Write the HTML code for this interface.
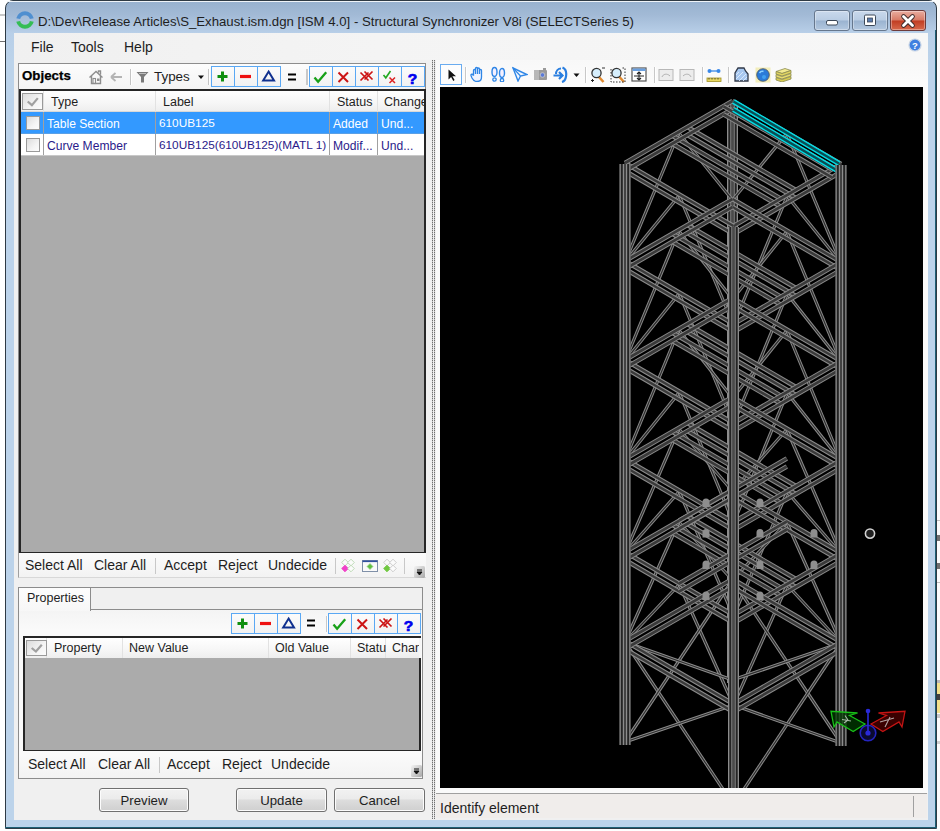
<!DOCTYPE html>
<html><head><meta charset="utf-8"><style>
*{margin:0;padding:0;box-sizing:border-box}
html,body{width:940px;height:831px;overflow:hidden;background:#fff;font-family:"Liberation Sans", sans-serif;}
.a{position:absolute}
.t{position:absolute;white-space:nowrap;line-height:1}
</style></head><body>
<div class="a" style="left:0px;top:0px;width:940px;height:831px;background:#fff"></div>
<div class="a" style="left:0px;top:14px;width:6px;height:2px;background:#c8c8c8"></div>
<div class="a" style="left:0px;top:41px;width:6px;height:1px;background:#707070"></div>
<div class="a" style="left:936px;top:41px;width:4px;height:1px;background:#707070"></div>
<div class="a" style="left:936px;top:0px;width:4px;height:831px;background:#fbfbfb"></div>
<div class="a" style="left:936px;top:520px;width:4px;height:1px;background:#c0c0c0"></div>
<div class="a" style="left:937px;top:535px;width:3px;height:6px;background:#707070"></div>
<div class="a" style="left:937px;top:563px;width:3px;height:6px;background:#707070"></div>
<div class="a" style="left:936px;top:582px;width:4px;height:1px;background:#c0c0c0"></div>
<div class="a" style="left:936px;top:680px;width:4px;height:3px;background:#b8b8b8"></div>
<div class="a" style="left:936px;top:683px;width:4px;height:30px;background:#f2e08a"></div>
<div class="a" style="left:937px;top:694px;width:3px;height:6px;background:#404040"></div>
<div class="a" style="left:936px;top:714px;width:4px;height:4px;background:#c8c8c8"></div>
<div class="a" style="left:936px;top:741px;width:4px;height:3px;background:#d0d0d0"></div>
<div class="a" style="left:5px;top:0px;width:932px;height:829px;border:1px solid #2e3a44;border-radius:8px 8px 0 0;background:linear-gradient(#97b1cf 0px,#a2bad6 14px,#b8cfe8 32px,#bcd3ea 60px,#bcd3ea 100%)"></div>
<div class="a" style="left:7px;top:1px;width:928px;height:1px;background:#eef3f8;border-radius:6px 6px 0 0"></div>
<div class="a" style="left:935px;top:30px;width:1px;height:798px;background:#1e5f74"></div>
<div class="a" style="left:5px;top:827px;width:932px;height:1px;background:#1e5f74"></div>
<div class="a" style="left:14px;top:33px;width:914px;height:787px;background:#f0f0f0"></div>
<div class="a" style="left:14px;top:33px;width:914px;height:27px;background:linear-gradient(90deg,#f0f0f0,#f4f4f4 40%,#f7f7f7)"></div>
<svg class="a" style="left:15px;top:10px;" width="20" height="20" viewBox="0 0 20 20"><path d="M3.2 8.6A7 7 0 0 1 16.8 8.6" fill="none" stroke="#4f8fd0" stroke-width="4"/><path d="M3.2 11.4A7 7 0 0 0 16.8 11.4" fill="none" stroke="#35bd55" stroke-width="4"/></svg>
<div class="t" style="left:38px;top:15px;font-size:13.2px;color:#1e1e1e;">D:\Dev\Release Articles\S_Exhaust.ism.dgn [ISM 4.0] - Structural Synchronizer V8i (SELECTSeries 5)</div>
<div class="a" style="left:814px;top:10px;width:36px;height:21px;border:1px solid #66778d;border-radius:3px;background:linear-gradient(#c9d9ec,#b9cce3 48%,#9ab3d0 52%,#b3c8e0);box-shadow:inset 0 0 0 1px rgba(255,255,255,0.35)"></div>
<svg class="a" style="left:814px;top:10px;" width="36" height="21" viewBox="0 0 36 21"><rect x="12.5" y="10.5" width="11" height="4.5" rx="1.5" fill="#fff" stroke="#3c4858" stroke-width="1"/></svg>
<div class="a" style="left:852px;top:10px;width:36px;height:21px;border:1px solid #66778d;border-radius:3px;background:linear-gradient(#c9d9ec,#b9cce3 48%,#9ab3d0 52%,#b3c8e0);box-shadow:inset 0 0 0 1px rgba(255,255,255,0.35)"></div>
<svg class="a" style="left:852px;top:10px;" width="36" height="21" viewBox="0 0 36 21"><rect x="12.5" y="5" width="11" height="10.5" rx="1.2" fill="#fff" stroke="#3c4858" stroke-width="1"/><rect x="15.5" y="8" width="5" height="4" fill="#5a7cae" stroke="#3c4858" stroke-width="0.8"/></svg>
<div class="a" style="left:890px;top:10px;width:36px;height:21px;border:1px solid #6d3b3b;border-radius:3px;background:linear-gradient(#e9ada0,#d77a66 48%,#c13d22 52%,#d7694c);box-shadow:inset 0 0 0 1px rgba(255,255,255,0.35)"></div>
<svg class="a" style="left:890px;top:10px;" width="36" height="21" viewBox="0 0 36 21"><path d="M13.5 6.5l9 9M22.5 6.5l-9 9" stroke="#3c2a2a" stroke-width="4.6" stroke-linecap="round"/><path d="M13.5 6.5l9 9M22.5 6.5l-9 9" stroke="#fff" stroke-width="2.8" stroke-linecap="round"/></svg>
<div class="t" style="left:31px;top:40px;font-size:14px;color:#1e1e1e;">File</div>
<div class="t" style="left:71px;top:40px;font-size:14px;color:#1e1e1e;">Tools</div>
<div class="t" style="left:124px;top:40px;font-size:14px;color:#1e1e1e;">Help</div>
<svg class="a" style="left:908px;top:38px;" width="14" height="14" viewBox="0 0 14 14"><circle cx="7" cy="7" r="6" fill="#3f7fe0" stroke="#c8d4e4" stroke-width="1.2"/><text x="7" y="11" text-anchor="middle" font-family="Liberation Sans" font-weight="bold" font-size="9.5" fill="#fff">?</text></svg>
<div class="a" style="left:436px;top:60px;width:492px;height:733px;background:#fafafa"></div>
<div class="a" style="left:440px;top:87px;width:483px;height:701px;background:#000;overflow:hidden"></div>
<svg class="a" style="left:440px;top:87px" width="483" height="701" viewBox="440 87 483 701"><rect x="727.0" y="102.0" width="11" height="581.0" fill="#242424"/>
<rect x="727.0" y="102.0" width="1.3" height="581.0" fill="#8c8c8c"/>
<rect x="730.3" y="102.0" width="1.2" height="581.0" fill="#8c8c8c"/>
<rect x="733.5" y="102.0" width="1.2" height="581.0" fill="#8c8c8c"/>
<rect x="736.7" y="102.0" width="1.3" height="581.0" fill="#8c8c8c"/>
<rect x="731.7" y="102.0" width="1.6" height="581.0" fill="#4a4a4a"/>
<line x1="732.5" y1="200.0" x2="786.8" y2="133.5" stroke="#8c8c8c" stroke-width="3.2"/>
<line x1="732.5" y1="200.0" x2="786.8" y2="133.5" stroke="#2c2c2c" stroke-width="1.2"/>
<line x1="841.0" y1="263.0" x2="786.8" y2="133.5" stroke="#8c8c8c" stroke-width="3.2"/>
<line x1="841.0" y1="263.0" x2="786.8" y2="133.5" stroke="#2c2c2c" stroke-width="1.2"/>
<line x1="841.0" y1="263.0" x2="787.2" y2="196.0" stroke="#8c8c8c" stroke-width="3.2"/>
<line x1="841.0" y1="263.0" x2="787.2" y2="196.0" stroke="#2c2c2c" stroke-width="1.2"/>
<line x1="733.5" y1="325.0" x2="787.2" y2="196.0" stroke="#8c8c8c" stroke-width="3.2"/>
<line x1="733.5" y1="325.0" x2="787.2" y2="196.0" stroke="#2c2c2c" stroke-width="1.2"/>
<line x1="625.0" y1="262.0" x2="679.2" y2="195.5" stroke="#8c8c8c" stroke-width="3.2"/>
<line x1="625.0" y1="262.0" x2="679.2" y2="195.5" stroke="#2c2c2c" stroke-width="1.2"/>
<line x1="733.5" y1="325.0" x2="679.2" y2="195.5" stroke="#8c8c8c" stroke-width="3.2"/>
<line x1="733.5" y1="325.0" x2="679.2" y2="195.5" stroke="#2c2c2c" stroke-width="1.2"/>
<line x1="732.5" y1="200.0" x2="678.8" y2="133.0" stroke="#8c8c8c" stroke-width="3.2"/>
<line x1="732.5" y1="200.0" x2="678.8" y2="133.0" stroke="#2c2c2c" stroke-width="1.2"/>
<line x1="625.0" y1="262.0" x2="678.8" y2="133.0" stroke="#8c8c8c" stroke-width="3.2"/>
<line x1="625.0" y1="262.0" x2="678.8" y2="133.0" stroke="#2c2c2c" stroke-width="1.2"/>
<line x1="732.5" y1="299.0" x2="786.8" y2="231.5" stroke="#8c8c8c" stroke-width="3.2"/>
<line x1="732.5" y1="299.0" x2="786.8" y2="231.5" stroke="#2c2c2c" stroke-width="1.2"/>
<line x1="841.0" y1="362.0" x2="786.8" y2="231.5" stroke="#8c8c8c" stroke-width="3.2"/>
<line x1="841.0" y1="362.0" x2="786.8" y2="231.5" stroke="#2c2c2c" stroke-width="1.2"/>
<line x1="841.0" y1="362.0" x2="787.2" y2="294.0" stroke="#8c8c8c" stroke-width="3.2"/>
<line x1="841.0" y1="362.0" x2="787.2" y2="294.0" stroke="#2c2c2c" stroke-width="1.2"/>
<line x1="733.5" y1="424.0" x2="787.2" y2="294.0" stroke="#8c8c8c" stroke-width="3.2"/>
<line x1="733.5" y1="424.0" x2="787.2" y2="294.0" stroke="#2c2c2c" stroke-width="1.2"/>
<line x1="625.0" y1="361.0" x2="679.2" y2="293.5" stroke="#8c8c8c" stroke-width="3.2"/>
<line x1="625.0" y1="361.0" x2="679.2" y2="293.5" stroke="#2c2c2c" stroke-width="1.2"/>
<line x1="733.5" y1="424.0" x2="679.2" y2="293.5" stroke="#8c8c8c" stroke-width="3.2"/>
<line x1="733.5" y1="424.0" x2="679.2" y2="293.5" stroke="#2c2c2c" stroke-width="1.2"/>
<line x1="732.5" y1="299.0" x2="678.8" y2="231.0" stroke="#8c8c8c" stroke-width="3.2"/>
<line x1="732.5" y1="299.0" x2="678.8" y2="231.0" stroke="#2c2c2c" stroke-width="1.2"/>
<line x1="625.0" y1="361.0" x2="678.8" y2="231.0" stroke="#8c8c8c" stroke-width="3.2"/>
<line x1="625.0" y1="361.0" x2="678.8" y2="231.0" stroke="#2c2c2c" stroke-width="1.2"/>
<line x1="732.5" y1="398.0" x2="786.8" y2="330.5" stroke="#8c8c8c" stroke-width="3.2"/>
<line x1="732.5" y1="398.0" x2="786.8" y2="330.5" stroke="#2c2c2c" stroke-width="1.2"/>
<line x1="841.0" y1="461.0" x2="786.8" y2="330.5" stroke="#8c8c8c" stroke-width="3.2"/>
<line x1="841.0" y1="461.0" x2="786.8" y2="330.5" stroke="#2c2c2c" stroke-width="1.2"/>
<line x1="841.0" y1="461.0" x2="787.2" y2="393.0" stroke="#8c8c8c" stroke-width="3.2"/>
<line x1="841.0" y1="461.0" x2="787.2" y2="393.0" stroke="#2c2c2c" stroke-width="1.2"/>
<line x1="733.5" y1="523.0" x2="787.2" y2="393.0" stroke="#8c8c8c" stroke-width="3.2"/>
<line x1="733.5" y1="523.0" x2="787.2" y2="393.0" stroke="#2c2c2c" stroke-width="1.2"/>
<line x1="625.0" y1="460.0" x2="679.2" y2="392.5" stroke="#8c8c8c" stroke-width="3.2"/>
<line x1="625.0" y1="460.0" x2="679.2" y2="392.5" stroke="#2c2c2c" stroke-width="1.2"/>
<line x1="733.5" y1="523.0" x2="679.2" y2="392.5" stroke="#8c8c8c" stroke-width="3.2"/>
<line x1="733.5" y1="523.0" x2="679.2" y2="392.5" stroke="#2c2c2c" stroke-width="1.2"/>
<line x1="732.5" y1="398.0" x2="678.8" y2="330.0" stroke="#8c8c8c" stroke-width="3.2"/>
<line x1="732.5" y1="398.0" x2="678.8" y2="330.0" stroke="#2c2c2c" stroke-width="1.2"/>
<line x1="625.0" y1="460.0" x2="678.8" y2="330.0" stroke="#8c8c8c" stroke-width="3.2"/>
<line x1="625.0" y1="460.0" x2="678.8" y2="330.0" stroke="#2c2c2c" stroke-width="1.2"/>
<line x1="732.5" y1="491.0" x2="786.8" y2="429.5" stroke="#8c8c8c" stroke-width="3.2"/>
<line x1="732.5" y1="491.0" x2="786.8" y2="429.5" stroke="#2c2c2c" stroke-width="1.2"/>
<line x1="841.0" y1="554.0" x2="786.8" y2="429.5" stroke="#8c8c8c" stroke-width="3.2"/>
<line x1="841.0" y1="554.0" x2="786.8" y2="429.5" stroke="#2c2c2c" stroke-width="1.2"/>
<line x1="841.0" y1="554.0" x2="787.2" y2="492.0" stroke="#8c8c8c" stroke-width="3.2"/>
<line x1="841.0" y1="554.0" x2="787.2" y2="492.0" stroke="#2c2c2c" stroke-width="1.2"/>
<line x1="733.5" y1="616.0" x2="787.2" y2="492.0" stroke="#8c8c8c" stroke-width="3.2"/>
<line x1="733.5" y1="616.0" x2="787.2" y2="492.0" stroke="#2c2c2c" stroke-width="1.2"/>
<line x1="625.0" y1="553.0" x2="679.2" y2="491.5" stroke="#8c8c8c" stroke-width="3.2"/>
<line x1="625.0" y1="553.0" x2="679.2" y2="491.5" stroke="#2c2c2c" stroke-width="1.2"/>
<line x1="733.5" y1="616.0" x2="679.2" y2="491.5" stroke="#8c8c8c" stroke-width="3.2"/>
<line x1="733.5" y1="616.0" x2="679.2" y2="491.5" stroke="#2c2c2c" stroke-width="1.2"/>
<line x1="732.5" y1="491.0" x2="678.8" y2="429.0" stroke="#8c8c8c" stroke-width="3.2"/>
<line x1="732.5" y1="491.0" x2="678.8" y2="429.0" stroke="#2c2c2c" stroke-width="1.2"/>
<line x1="625.0" y1="553.0" x2="678.8" y2="429.0" stroke="#8c8c8c" stroke-width="3.2"/>
<line x1="625.0" y1="553.0" x2="678.8" y2="429.0" stroke="#2c2c2c" stroke-width="1.2"/>
<line x1="732.5" y1="580.0" x2="786.8" y2="522.5" stroke="#8c8c8c" stroke-width="3.2"/>
<line x1="732.5" y1="580.0" x2="786.8" y2="522.5" stroke="#2c2c2c" stroke-width="1.2"/>
<line x1="841.0" y1="643.0" x2="786.8" y2="522.5" stroke="#8c8c8c" stroke-width="3.2"/>
<line x1="841.0" y1="643.0" x2="786.8" y2="522.5" stroke="#2c2c2c" stroke-width="1.2"/>
<line x1="841.0" y1="643.0" x2="787.2" y2="585.0" stroke="#8c8c8c" stroke-width="3.2"/>
<line x1="841.0" y1="643.0" x2="787.2" y2="585.0" stroke="#2c2c2c" stroke-width="1.2"/>
<line x1="733.5" y1="705.0" x2="787.2" y2="585.0" stroke="#8c8c8c" stroke-width="3.2"/>
<line x1="733.5" y1="705.0" x2="787.2" y2="585.0" stroke="#2c2c2c" stroke-width="1.2"/>
<line x1="625.0" y1="642.0" x2="679.2" y2="584.5" stroke="#8c8c8c" stroke-width="3.2"/>
<line x1="625.0" y1="642.0" x2="679.2" y2="584.5" stroke="#2c2c2c" stroke-width="1.2"/>
<line x1="733.5" y1="705.0" x2="679.2" y2="584.5" stroke="#8c8c8c" stroke-width="3.2"/>
<line x1="733.5" y1="705.0" x2="679.2" y2="584.5" stroke="#2c2c2c" stroke-width="1.2"/>
<line x1="732.5" y1="580.0" x2="678.8" y2="522.0" stroke="#8c8c8c" stroke-width="3.2"/>
<line x1="732.5" y1="580.0" x2="678.8" y2="522.0" stroke="#2c2c2c" stroke-width="1.2"/>
<line x1="625.0" y1="642.0" x2="678.8" y2="522.0" stroke="#8c8c8c" stroke-width="3.2"/>
<line x1="625.0" y1="642.0" x2="678.8" y2="522.0" stroke="#2c2c2c" stroke-width="1.2"/>
<line x1="732.5" y1="580.0" x2="841.0" y2="743.0" stroke="#8c8c8c" stroke-width="3.2"/>
<line x1="732.5" y1="580.0" x2="841.0" y2="743.0" stroke="#2c2c2c" stroke-width="1.2"/>
<line x1="841.0" y1="643.0" x2="732.5" y2="680.0" stroke="#8c8c8c" stroke-width="3.2"/>
<line x1="841.0" y1="643.0" x2="732.5" y2="680.0" stroke="#2c2c2c" stroke-width="1.2"/>
<line x1="841.0" y1="643.0" x2="733.5" y2="805.0" stroke="#8c8c8c" stroke-width="3.2"/>
<line x1="841.0" y1="643.0" x2="733.5" y2="805.0" stroke="#2c2c2c" stroke-width="1.2"/>
<line x1="733.5" y1="705.0" x2="841.0" y2="743.0" stroke="#8c8c8c" stroke-width="3.2"/>
<line x1="733.5" y1="705.0" x2="841.0" y2="743.0" stroke="#2c2c2c" stroke-width="1.2"/>
<line x1="625.0" y1="642.0" x2="733.5" y2="805.0" stroke="#8c8c8c" stroke-width="3.2"/>
<line x1="625.0" y1="642.0" x2="733.5" y2="805.0" stroke="#2c2c2c" stroke-width="1.2"/>
<line x1="733.5" y1="705.0" x2="625.0" y2="742.0" stroke="#8c8c8c" stroke-width="3.2"/>
<line x1="733.5" y1="705.0" x2="625.0" y2="742.0" stroke="#2c2c2c" stroke-width="1.2"/>
<line x1="732.5" y1="580.0" x2="625.0" y2="742.0" stroke="#8c8c8c" stroke-width="3.2"/>
<line x1="732.5" y1="580.0" x2="625.0" y2="742.0" stroke="#2c2c2c" stroke-width="1.2"/>
<line x1="625.0" y1="642.0" x2="732.5" y2="680.0" stroke="#8c8c8c" stroke-width="3.2"/>
<line x1="625.0" y1="642.0" x2="732.5" y2="680.0" stroke="#2c2c2c" stroke-width="1.2"/>
<line x1="687.4" y1="127.0" x2="795.9" y2="190.0" stroke="#8c8c8c" stroke-width="4.6"/>
<line x1="687.4" y1="127.0" x2="795.9" y2="190.0" stroke="#3a3a3a" stroke-width="2.6"/>
<line x1="687.4" y1="135.0" x2="795.9" y2="198.0" stroke="#8c8c8c" stroke-width="4.6"/>
<line x1="687.4" y1="135.0" x2="795.9" y2="198.0" stroke="#3a3a3a" stroke-width="2.6"/>
<line x1="672.3" y1="135.7" x2="780.8" y2="198.7" stroke="#8c8c8c" stroke-width="4.6"/>
<line x1="672.3" y1="135.7" x2="780.8" y2="198.7" stroke="#3a3a3a" stroke-width="2.6"/>
<line x1="672.3" y1="143.7" x2="780.8" y2="206.7" stroke="#8c8c8c" stroke-width="4.6"/>
<line x1="672.3" y1="143.7" x2="780.8" y2="206.7" stroke="#3a3a3a" stroke-width="2.6"/>
<line x1="732.5" y1="101.0" x2="841.0" y2="164.0" stroke="#8c8c8c" stroke-width="4.6"/>
<line x1="732.5" y1="101.0" x2="841.0" y2="164.0" stroke="#3a3a3a" stroke-width="2.6"/>
<line x1="732.5" y1="109.0" x2="841.0" y2="172.0" stroke="#8c8c8c" stroke-width="4.6"/>
<line x1="732.5" y1="109.0" x2="841.0" y2="172.0" stroke="#3a3a3a" stroke-width="2.6"/>
<line x1="841.0" y1="164.0" x2="733.5" y2="226.0" stroke="#8c8c8c" stroke-width="4.6"/>
<line x1="841.0" y1="164.0" x2="733.5" y2="226.0" stroke="#3a3a3a" stroke-width="2.6"/>
<line x1="841.0" y1="172.0" x2="733.5" y2="234.0" stroke="#8c8c8c" stroke-width="4.6"/>
<line x1="841.0" y1="172.0" x2="733.5" y2="234.0" stroke="#3a3a3a" stroke-width="2.6"/>
<line x1="733.5" y1="226.0" x2="625.0" y2="163.0" stroke="#8c8c8c" stroke-width="4.6"/>
<line x1="733.5" y1="226.0" x2="625.0" y2="163.0" stroke="#3a3a3a" stroke-width="2.6"/>
<line x1="733.5" y1="234.0" x2="625.0" y2="171.0" stroke="#8c8c8c" stroke-width="4.6"/>
<line x1="733.5" y1="234.0" x2="625.0" y2="171.0" stroke="#3a3a3a" stroke-width="2.6"/>
<line x1="625.0" y1="163.0" x2="732.5" y2="101.0" stroke="#8c8c8c" stroke-width="4.6"/>
<line x1="625.0" y1="163.0" x2="732.5" y2="101.0" stroke="#3a3a3a" stroke-width="2.6"/>
<line x1="625.0" y1="171.0" x2="732.5" y2="109.0" stroke="#8c8c8c" stroke-width="4.6"/>
<line x1="625.0" y1="171.0" x2="732.5" y2="109.0" stroke="#3a3a3a" stroke-width="2.6"/>
<line x1="687.4" y1="225.0" x2="795.9" y2="288.0" stroke="#8c8c8c" stroke-width="4.6"/>
<line x1="687.4" y1="225.0" x2="795.9" y2="288.0" stroke="#3a3a3a" stroke-width="2.6"/>
<line x1="687.4" y1="233.0" x2="795.9" y2="296.0" stroke="#8c8c8c" stroke-width="4.6"/>
<line x1="687.4" y1="233.0" x2="795.9" y2="296.0" stroke="#3a3a3a" stroke-width="2.6"/>
<line x1="672.3" y1="233.7" x2="780.8" y2="296.7" stroke="#8c8c8c" stroke-width="4.6"/>
<line x1="672.3" y1="233.7" x2="780.8" y2="296.7" stroke="#3a3a3a" stroke-width="2.6"/>
<line x1="672.3" y1="241.7" x2="780.8" y2="304.7" stroke="#8c8c8c" stroke-width="4.6"/>
<line x1="672.3" y1="241.7" x2="780.8" y2="304.7" stroke="#3a3a3a" stroke-width="2.6"/>
<line x1="732.5" y1="199.0" x2="841.0" y2="262.0" stroke="#8c8c8c" stroke-width="4.6"/>
<line x1="732.5" y1="199.0" x2="841.0" y2="262.0" stroke="#3a3a3a" stroke-width="2.6"/>
<line x1="732.5" y1="207.0" x2="841.0" y2="270.0" stroke="#8c8c8c" stroke-width="4.6"/>
<line x1="732.5" y1="207.0" x2="841.0" y2="270.0" stroke="#3a3a3a" stroke-width="2.6"/>
<line x1="841.0" y1="262.0" x2="733.5" y2="324.0" stroke="#8c8c8c" stroke-width="4.6"/>
<line x1="841.0" y1="262.0" x2="733.5" y2="324.0" stroke="#3a3a3a" stroke-width="2.6"/>
<line x1="841.0" y1="270.0" x2="733.5" y2="332.0" stroke="#8c8c8c" stroke-width="4.6"/>
<line x1="841.0" y1="270.0" x2="733.5" y2="332.0" stroke="#3a3a3a" stroke-width="2.6"/>
<line x1="733.5" y1="324.0" x2="625.0" y2="261.0" stroke="#8c8c8c" stroke-width="4.6"/>
<line x1="733.5" y1="324.0" x2="625.0" y2="261.0" stroke="#3a3a3a" stroke-width="2.6"/>
<line x1="733.5" y1="332.0" x2="625.0" y2="269.0" stroke="#8c8c8c" stroke-width="4.6"/>
<line x1="733.5" y1="332.0" x2="625.0" y2="269.0" stroke="#3a3a3a" stroke-width="2.6"/>
<line x1="625.0" y1="261.0" x2="732.5" y2="199.0" stroke="#8c8c8c" stroke-width="4.6"/>
<line x1="625.0" y1="261.0" x2="732.5" y2="199.0" stroke="#3a3a3a" stroke-width="2.6"/>
<line x1="625.0" y1="269.0" x2="732.5" y2="207.0" stroke="#8c8c8c" stroke-width="4.6"/>
<line x1="625.0" y1="269.0" x2="732.5" y2="207.0" stroke="#3a3a3a" stroke-width="2.6"/>
<line x1="687.4" y1="324.0" x2="795.9" y2="387.0" stroke="#8c8c8c" stroke-width="4.6"/>
<line x1="687.4" y1="324.0" x2="795.9" y2="387.0" stroke="#3a3a3a" stroke-width="2.6"/>
<line x1="687.4" y1="332.0" x2="795.9" y2="395.0" stroke="#8c8c8c" stroke-width="4.6"/>
<line x1="687.4" y1="332.0" x2="795.9" y2="395.0" stroke="#3a3a3a" stroke-width="2.6"/>
<line x1="672.3" y1="332.7" x2="780.8" y2="395.7" stroke="#8c8c8c" stroke-width="4.6"/>
<line x1="672.3" y1="332.7" x2="780.8" y2="395.7" stroke="#3a3a3a" stroke-width="2.6"/>
<line x1="672.3" y1="340.7" x2="780.8" y2="403.7" stroke="#8c8c8c" stroke-width="4.6"/>
<line x1="672.3" y1="340.7" x2="780.8" y2="403.7" stroke="#3a3a3a" stroke-width="2.6"/>
<line x1="732.5" y1="298.0" x2="841.0" y2="361.0" stroke="#8c8c8c" stroke-width="4.6"/>
<line x1="732.5" y1="298.0" x2="841.0" y2="361.0" stroke="#3a3a3a" stroke-width="2.6"/>
<line x1="732.5" y1="306.0" x2="841.0" y2="369.0" stroke="#8c8c8c" stroke-width="4.6"/>
<line x1="732.5" y1="306.0" x2="841.0" y2="369.0" stroke="#3a3a3a" stroke-width="2.6"/>
<line x1="841.0" y1="361.0" x2="733.5" y2="423.0" stroke="#8c8c8c" stroke-width="4.6"/>
<line x1="841.0" y1="361.0" x2="733.5" y2="423.0" stroke="#3a3a3a" stroke-width="2.6"/>
<line x1="841.0" y1="369.0" x2="733.5" y2="431.0" stroke="#8c8c8c" stroke-width="4.6"/>
<line x1="841.0" y1="369.0" x2="733.5" y2="431.0" stroke="#3a3a3a" stroke-width="2.6"/>
<line x1="733.5" y1="423.0" x2="625.0" y2="360.0" stroke="#8c8c8c" stroke-width="4.6"/>
<line x1="733.5" y1="423.0" x2="625.0" y2="360.0" stroke="#3a3a3a" stroke-width="2.6"/>
<line x1="733.5" y1="431.0" x2="625.0" y2="368.0" stroke="#8c8c8c" stroke-width="4.6"/>
<line x1="733.5" y1="431.0" x2="625.0" y2="368.0" stroke="#3a3a3a" stroke-width="2.6"/>
<line x1="625.0" y1="360.0" x2="732.5" y2="298.0" stroke="#8c8c8c" stroke-width="4.6"/>
<line x1="625.0" y1="360.0" x2="732.5" y2="298.0" stroke="#3a3a3a" stroke-width="2.6"/>
<line x1="625.0" y1="368.0" x2="732.5" y2="306.0" stroke="#8c8c8c" stroke-width="4.6"/>
<line x1="625.0" y1="368.0" x2="732.5" y2="306.0" stroke="#3a3a3a" stroke-width="2.6"/>
<line x1="687.4" y1="423.0" x2="795.9" y2="486.0" stroke="#8c8c8c" stroke-width="4.6"/>
<line x1="687.4" y1="423.0" x2="795.9" y2="486.0" stroke="#3a3a3a" stroke-width="2.6"/>
<line x1="687.4" y1="431.0" x2="795.9" y2="494.0" stroke="#8c8c8c" stroke-width="4.6"/>
<line x1="687.4" y1="431.0" x2="795.9" y2="494.0" stroke="#3a3a3a" stroke-width="2.6"/>
<line x1="672.3" y1="431.7" x2="780.8" y2="494.7" stroke="#8c8c8c" stroke-width="4.6"/>
<line x1="672.3" y1="431.7" x2="780.8" y2="494.7" stroke="#3a3a3a" stroke-width="2.6"/>
<line x1="672.3" y1="439.7" x2="780.8" y2="502.7" stroke="#8c8c8c" stroke-width="4.6"/>
<line x1="672.3" y1="439.7" x2="780.8" y2="502.7" stroke="#3a3a3a" stroke-width="2.6"/>
<line x1="732.5" y1="397.0" x2="841.0" y2="460.0" stroke="#8c8c8c" stroke-width="4.6"/>
<line x1="732.5" y1="397.0" x2="841.0" y2="460.0" stroke="#3a3a3a" stroke-width="2.6"/>
<line x1="732.5" y1="405.0" x2="841.0" y2="468.0" stroke="#8c8c8c" stroke-width="4.6"/>
<line x1="732.5" y1="405.0" x2="841.0" y2="468.0" stroke="#3a3a3a" stroke-width="2.6"/>
<line x1="841.0" y1="460.0" x2="733.5" y2="522.0" stroke="#8c8c8c" stroke-width="4.6"/>
<line x1="841.0" y1="460.0" x2="733.5" y2="522.0" stroke="#3a3a3a" stroke-width="2.6"/>
<line x1="841.0" y1="468.0" x2="733.5" y2="530.0" stroke="#8c8c8c" stroke-width="4.6"/>
<line x1="841.0" y1="468.0" x2="733.5" y2="530.0" stroke="#3a3a3a" stroke-width="2.6"/>
<line x1="733.5" y1="522.0" x2="625.0" y2="459.0" stroke="#8c8c8c" stroke-width="4.6"/>
<line x1="733.5" y1="522.0" x2="625.0" y2="459.0" stroke="#3a3a3a" stroke-width="2.6"/>
<line x1="733.5" y1="530.0" x2="625.0" y2="467.0" stroke="#8c8c8c" stroke-width="4.6"/>
<line x1="733.5" y1="530.0" x2="625.0" y2="467.0" stroke="#3a3a3a" stroke-width="2.6"/>
<line x1="625.0" y1="459.0" x2="732.5" y2="397.0" stroke="#8c8c8c" stroke-width="4.6"/>
<line x1="625.0" y1="459.0" x2="732.5" y2="397.0" stroke="#3a3a3a" stroke-width="2.6"/>
<line x1="625.0" y1="467.0" x2="732.5" y2="405.0" stroke="#8c8c8c" stroke-width="4.6"/>
<line x1="625.0" y1="467.0" x2="732.5" y2="405.0" stroke="#3a3a3a" stroke-width="2.6"/>
<line x1="687.4" y1="516.0" x2="795.9" y2="579.0" stroke="#8c8c8c" stroke-width="4.6"/>
<line x1="687.4" y1="516.0" x2="795.9" y2="579.0" stroke="#3a3a3a" stroke-width="2.6"/>
<line x1="687.4" y1="524.0" x2="795.9" y2="587.0" stroke="#8c8c8c" stroke-width="4.6"/>
<line x1="687.4" y1="524.0" x2="795.9" y2="587.0" stroke="#3a3a3a" stroke-width="2.6"/>
<line x1="672.3" y1="524.7" x2="780.8" y2="587.7" stroke="#8c8c8c" stroke-width="4.6"/>
<line x1="672.3" y1="524.7" x2="780.8" y2="587.7" stroke="#3a3a3a" stroke-width="2.6"/>
<line x1="672.3" y1="532.7" x2="780.8" y2="595.7" stroke="#8c8c8c" stroke-width="4.6"/>
<line x1="672.3" y1="532.7" x2="780.8" y2="595.7" stroke="#3a3a3a" stroke-width="2.6"/>
<line x1="732.5" y1="490.0" x2="841.0" y2="553.0" stroke="#8c8c8c" stroke-width="4.6"/>
<line x1="732.5" y1="490.0" x2="841.0" y2="553.0" stroke="#3a3a3a" stroke-width="2.6"/>
<line x1="732.5" y1="498.0" x2="841.0" y2="561.0" stroke="#8c8c8c" stroke-width="4.6"/>
<line x1="732.5" y1="498.0" x2="841.0" y2="561.0" stroke="#3a3a3a" stroke-width="2.6"/>
<line x1="841.0" y1="553.0" x2="733.5" y2="615.0" stroke="#8c8c8c" stroke-width="4.6"/>
<line x1="841.0" y1="553.0" x2="733.5" y2="615.0" stroke="#3a3a3a" stroke-width="2.6"/>
<line x1="841.0" y1="561.0" x2="733.5" y2="623.0" stroke="#8c8c8c" stroke-width="4.6"/>
<line x1="841.0" y1="561.0" x2="733.5" y2="623.0" stroke="#3a3a3a" stroke-width="2.6"/>
<line x1="733.5" y1="615.0" x2="625.0" y2="552.0" stroke="#8c8c8c" stroke-width="4.6"/>
<line x1="733.5" y1="615.0" x2="625.0" y2="552.0" stroke="#3a3a3a" stroke-width="2.6"/>
<line x1="733.5" y1="623.0" x2="625.0" y2="560.0" stroke="#8c8c8c" stroke-width="4.6"/>
<line x1="733.5" y1="623.0" x2="625.0" y2="560.0" stroke="#3a3a3a" stroke-width="2.6"/>
<line x1="625.0" y1="552.0" x2="732.5" y2="490.0" stroke="#8c8c8c" stroke-width="4.6"/>
<line x1="625.0" y1="552.0" x2="732.5" y2="490.0" stroke="#3a3a3a" stroke-width="2.6"/>
<line x1="625.0" y1="560.0" x2="732.5" y2="498.0" stroke="#8c8c8c" stroke-width="4.6"/>
<line x1="625.0" y1="560.0" x2="732.5" y2="498.0" stroke="#3a3a3a" stroke-width="2.6"/>
<line x1="732.5" y1="579.0" x2="841.0" y2="642.0" stroke="#8c8c8c" stroke-width="4.6"/>
<line x1="732.5" y1="579.0" x2="841.0" y2="642.0" stroke="#3a3a3a" stroke-width="2.6"/>
<line x1="732.5" y1="587.0" x2="841.0" y2="650.0" stroke="#8c8c8c" stroke-width="4.6"/>
<line x1="732.5" y1="587.0" x2="841.0" y2="650.0" stroke="#3a3a3a" stroke-width="2.6"/>
<line x1="841.0" y1="642.0" x2="733.5" y2="704.0" stroke="#8c8c8c" stroke-width="4.6"/>
<line x1="841.0" y1="642.0" x2="733.5" y2="704.0" stroke="#3a3a3a" stroke-width="2.6"/>
<line x1="841.0" y1="650.0" x2="733.5" y2="712.0" stroke="#8c8c8c" stroke-width="4.6"/>
<line x1="841.0" y1="650.0" x2="733.5" y2="712.0" stroke="#3a3a3a" stroke-width="2.6"/>
<line x1="733.5" y1="704.0" x2="625.0" y2="641.0" stroke="#8c8c8c" stroke-width="4.6"/>
<line x1="733.5" y1="704.0" x2="625.0" y2="641.0" stroke="#3a3a3a" stroke-width="2.6"/>
<line x1="733.5" y1="712.0" x2="625.0" y2="649.0" stroke="#8c8c8c" stroke-width="4.6"/>
<line x1="733.5" y1="712.0" x2="625.0" y2="649.0" stroke="#3a3a3a" stroke-width="2.6"/>
<line x1="625.0" y1="641.0" x2="732.5" y2="579.0" stroke="#8c8c8c" stroke-width="4.6"/>
<line x1="625.0" y1="641.0" x2="732.5" y2="579.0" stroke="#3a3a3a" stroke-width="2.6"/>
<line x1="625.0" y1="649.0" x2="732.5" y2="587.0" stroke="#8c8c8c" stroke-width="4.6"/>
<line x1="625.0" y1="649.0" x2="732.5" y2="587.0" stroke="#3a3a3a" stroke-width="2.6"/>
<line x1="723.4" y1="106.3" x2="831.9" y2="169.3" stroke="#8c8c8c" stroke-width="4.6"/>
<line x1="723.4" y1="106.3" x2="831.9" y2="169.3" stroke="#3a3a3a" stroke-width="2.6"/>
<line x1="723.4" y1="114.3" x2="831.9" y2="177.3" stroke="#8c8c8c" stroke-width="4.6"/>
<line x1="723.4" y1="114.3" x2="831.9" y2="177.3" stroke="#3a3a3a" stroke-width="2.6"/>
<line x1="786.8" y1="458.5" x2="679.2" y2="520.5" stroke="#8c8c8c" stroke-width="4.6"/>
<line x1="786.8" y1="458.5" x2="679.2" y2="520.5" stroke="#3a3a3a" stroke-width="2.6"/>
<line x1="786.8" y1="466.5" x2="679.2" y2="528.5" stroke="#8c8c8c" stroke-width="4.6"/>
<line x1="786.8" y1="466.5" x2="679.2" y2="528.5" stroke="#3a3a3a" stroke-width="2.6"/>
<line x1="786.8" y1="521.5" x2="679.2" y2="583.5" stroke="#8c8c8c" stroke-width="4.6"/>
<line x1="786.8" y1="521.5" x2="679.2" y2="583.5" stroke="#3a3a3a" stroke-width="2.6"/>
<line x1="786.8" y1="529.5" x2="679.2" y2="591.5" stroke="#8c8c8c" stroke-width="4.6"/>
<line x1="786.8" y1="529.5" x2="679.2" y2="591.5" stroke="#3a3a3a" stroke-width="2.6"/>
<path d="M702.5 507v-5a3.5 3.5 0 0 1 7 0v5Z" fill="#8e8e8e"/>
<path d="M756.5 507v-5a3.5 3.5 0 0 1 7 0v5Z" fill="#8e8e8e"/>
<path d="M702.5 537.5v-5a3.5 3.5 0 0 1 7 0v5Z" fill="#8e8e8e"/>
<path d="M756.5 537.5v-5a3.5 3.5 0 0 1 7 0v5Z" fill="#8e8e8e"/>
<path d="M810.5 537.5v-5a3.5 3.5 0 0 1 7 0v5Z" fill="#8e8e8e"/>
<path d="M702.5 569v-5a3.5 3.5 0 0 1 7 0v5Z" fill="#8e8e8e"/>
<path d="M756.5 569v-5a3.5 3.5 0 0 1 7 0v5Z" fill="#8e8e8e"/>
<path d="M810.5 569v-5a3.5 3.5 0 0 1 7 0v5Z" fill="#8e8e8e"/>
<path d="M702.5 600v-5a3.5 3.5 0 0 1 7 0v5Z" fill="#8e8e8e"/>
<path d="M756.5 600v-5a3.5 3.5 0 0 1 7 0v5Z" fill="#8e8e8e"/>
<line x1="733.5" y1="101.5" x2="839.0" y2="163.5" stroke="#00dde6" stroke-width="5.2"/>
<line x1="733.5" y1="101.5" x2="839.0" y2="163.5" stroke="#0b4c52" stroke-width="2.4"/>
<line x1="733.5" y1="109.5" x2="839.0" y2="171.5" stroke="#00dde6" stroke-width="5.2"/>
<line x1="733.5" y1="109.5" x2="839.0" y2="171.5" stroke="#0b4c52" stroke-width="2.4"/>
<rect x="619.5" y="164.0" width="11" height="581.0" fill="#242424"/>
<rect x="619.5" y="164.0" width="1.3" height="581.0" fill="#8c8c8c"/>
<rect x="622.8" y="164.0" width="1.2" height="581.0" fill="#8c8c8c"/>
<rect x="626.0" y="164.0" width="1.2" height="581.0" fill="#8c8c8c"/>
<rect x="629.2" y="164.0" width="1.3" height="581.0" fill="#8c8c8c"/>
<rect x="624.2" y="164.0" width="1.6" height="581.0" fill="#4a4a4a"/>
<rect x="835.5" y="165.0" width="11" height="581.0" fill="#242424"/>
<rect x="835.5" y="165.0" width="1.3" height="581.0" fill="#8c8c8c"/>
<rect x="838.8" y="165.0" width="1.2" height="581.0" fill="#8c8c8c"/>
<rect x="842.0" y="165.0" width="1.2" height="581.0" fill="#8c8c8c"/>
<rect x="845.2" y="165.0" width="1.3" height="581.0" fill="#8c8c8c"/>
<rect x="840.2" y="165.0" width="1.6" height="581.0" fill="#4a4a4a"/>
<rect x="728.0" y="227.0" width="11" height="581.0" fill="#242424"/>
<rect x="728.0" y="227.0" width="1.3" height="581.0" fill="#8c8c8c"/>
<rect x="731.3" y="227.0" width="1.2" height="581.0" fill="#8c8c8c"/>
<rect x="734.5" y="227.0" width="1.2" height="581.0" fill="#8c8c8c"/>
<rect x="737.7" y="227.0" width="1.3" height="581.0" fill="#8c8c8c"/>
<rect x="732.7" y="227.0" width="1.6" height="581.0" fill="#4a4a4a"/></svg>
<svg class="a" style="left:440px;top:87px;" width="483" height="701" viewBox="0 0 483 701"><g transform="translate(-440 -87)"><circle cx="870" cy="533.6" r="4.6" fill="#202020" stroke="#d4d4d4" stroke-width="1.6"/><path d="M865 724L849.5 715.5L857.5 713L831 711.3L834 727L837 722L853.2 731.5Z" fill="#003a00" fill-opacity="0.75" stroke="#18c018" stroke-width="1.3"/><path d="M842 719.5l9 1.5M845 715.5l3 4.5M848 720l-4 3" stroke="#a8b8a8" stroke-width="1.1"/><path d="M871 724L886.5 715.5L878.5 713L905 711.3L902 727L899 722L882.8 731.5Z" fill="#3a0000" stroke="#c41414" stroke-width="1.3"/><path d="M880 722l14-4M885 727l5-10" stroke="#b4a4a4" stroke-width="1.1"/><circle cx="868" cy="733" r="7.8" fill="#0a0a30" stroke="#2424c0" stroke-width="1.6"/><circle cx="868" cy="733" r="2.6" fill="#2a2ad8"/><path d="M868 711v22" stroke="#2a2ad8" stroke-width="1.6"/><circle cx="868" cy="711" r="2.3" fill="#2a2ad8"/></g></svg>
<div class="a" style="left:436px;top:60px;width:492px;height:27px;background:linear-gradient(#f8f8f8,#fcfcfc)"></div>
<div class="a" style="left:440px;top:64px;width:22px;height:21px;border:1px solid #6aacf0;background:#fdfdfd"></div>
<svg class="a" style="left:440px;top:64px;" width="22" height="21" viewBox="0 0 22 21"><path d="M8.5 5.5v10l2.6-2.6 2.2 4 1.3-.8-2.2-3.9h3.6Z" fill="#111"/></svg>
<div class="a" style="left:465px;top:67px;width:1px;height:16px;background:#c8c8c8;box-shadow:1px 0 0 #fff"></div>
<div class="a" style="left:585px;top:67px;width:1px;height:16px;background:#c8c8c8;box-shadow:1px 0 0 #fff"></div>
<div class="a" style="left:654px;top:67px;width:1px;height:16px;background:#c8c8c8;box-shadow:1px 0 0 #fff"></div>
<div class="a" style="left:702px;top:67px;width:1px;height:16px;background:#c8c8c8;box-shadow:1px 0 0 #fff"></div>
<div class="a" style="left:728px;top:67px;width:1px;height:16px;background:#c8c8c8;box-shadow:1px 0 0 #fff"></div>
<svg class="a" style="left:470px;top:66px;" width="14" height="16" viewBox="0 0 14 16"><path d="M3.5 9V4.5a1 1 0 0 1 2 0V8V2.5a1 1 0 0 1 2 0V8V3a1 1 0 0 1 2 0v5V4.5a1 1 0 0 1 2 0V11c0 3-2 4.5-4.5 4.5S3 14 2 12L1 9.5a1 1 0 0 1 2-.5Z" fill="#f0f4ff" stroke="#2f86e6" stroke-width="1.3"/></svg>
<svg class="a" style="left:490px;top:66px;" width="17" height="16" viewBox="0 0 17 16"><ellipse cx="4.5" cy="6" rx="2.5" ry="4.5" fill="#f4f0ff" stroke="#2f86e6" stroke-width="1.4"/><circle cx="4.5" cy="13.5" r="1.7" fill="none" stroke="#2f86e6" stroke-width="1.3"/><ellipse cx="12" cy="7" rx="2.5" ry="4.5" fill="#f4f0ff" stroke="#2f86e6" stroke-width="1.4"/><circle cx="12" cy="14.2" r="1.7" fill="none" stroke="#2f86e6" stroke-width="1.3"/></svg>
<svg class="a" style="left:512px;top:66px;" width="16" height="16" viewBox="0 0 16 16"><path d="M1 2L15 8.5L8.5 10L6 15Z" fill="#f0f6ff" stroke="#2f86e6" stroke-width="1.4"/><path d="M1 2L8.5 10" stroke="#2f86e6" stroke-width="1.1"/></svg>
<svg class="a" style="left:533px;top:67px;" width="16" height="14" viewBox="0 0 16 14"><rect x="1" y="3" width="13" height="10" rx="1" fill="#9a9a9a"/><rect x="1" y="3" width="5" height="10" fill="#b8b8b8"/><circle cx="9.5" cy="8" r="2.3" fill="#5a7ad8" stroke="#ccc" stroke-width="0.8"/><rect x="10" y="1" width="3" height="2" fill="#9a9a9a"/></svg>
<svg class="a" style="left:552px;top:66px;" width="18" height="17" viewBox="0 0 18 17"><path d="M9 2.5c-3 0-5 2.5-5 5.5" fill="none" stroke="#2a7fe0" stroke-width="2"/><path d="M10.5 1.5c3.5 1.5 4 6 3.5 9s-2 5-4 5.5" fill="none" stroke="#2a7fe0" stroke-width="2.2"/><path d="M1.5 9.5h9M7 6l3.5 3.5L7 13" fill="none" stroke="#2a7fe0" stroke-width="2.2"/></svg>
<svg class="a" style="left:573px;top:73px;" width="7" height="5" viewBox="0 0 7 5"><path d="M0.5 0.5h6L3.5 4Z" fill="#111"/></svg>
<svg class="a" style="left:590px;top:66px;" width="16" height="17" viewBox="0 0 16 17"><path d="M8.5 10.5l5 5.5" stroke="#e08a30" stroke-width="2.6"/><circle cx="6.5" cy="7" r="4.6" fill="#d6eefc" stroke="#333" stroke-width="1.3"/><path d="M12 2h3" stroke="#333" stroke-width="1"/><path d="M1 14.5h3M2.5 13v3" stroke="#222" stroke-width="1"/></svg>
<svg class="a" style="left:610px;top:66px;" width="16" height="17" viewBox="0 0 16 17"><path d="M9 10.5l5 5.5" stroke="#e08a30" stroke-width="2.6"/><circle cx="6.5" cy="7" r="4.6" fill="#d6eefc" stroke="#333" stroke-width="1.3"/><path d="M1 3v13h14V2h-3" fill="none" stroke="#333" stroke-width="1" stroke-dasharray="1.5 1.5"/></svg>
<svg class="a" style="left:631px;top:67px;" width="16" height="15" viewBox="0 0 16 15"><rect x="1" y="1" width="14" height="13" fill="#fff" stroke="#555" stroke-width="1.2"/><rect x="1.5" y="1.5" width="13" height="2.5" fill="#6aa0e0"/><path d="M8 5v8M3 9h10M6 7l2-2 2 2M6 11l2 2 2-2" fill="none" stroke="#222" stroke-width="1.1"/></svg>
<svg class="a" style="left:658px;top:68px;" width="16" height="14" viewBox="0 0 16 14"><rect x="1" y="1.5" width="14" height="11" fill="#ececec" stroke="#b8b8b8" stroke-width="1"/><path d="M4 9c1-3 5-4 8-1" fill="none" stroke="#b0b0b0" stroke-width="1"/></svg>
<svg class="a" style="left:679px;top:68px;" width="16" height="14" viewBox="0 0 16 14"><rect x="1" y="1.5" width="14" height="11" fill="#ececec" stroke="#b8b8b8" stroke-width="1"/><path d="M4 8c3-3 7-2 8 1" fill="none" stroke="#b0b0b0" stroke-width="1"/></svg>
<svg class="a" style="left:706px;top:67px;" width="16" height="16" viewBox="0 0 16 16"><circle cx="3.5" cy="4" r="2" fill="#3a88e8"/><circle cx="12.5" cy="4" r="2" fill="#3a88e8"/><path d="M3.5 4h9" stroke="#3a88e8" stroke-width="1.3"/><rect x="1" y="11" width="14" height="3.5" fill="#e8d860" stroke="#a09020" stroke-width="0.8"/><path d="M3 11v1.5M6 11v1.5M9 11v1.5M12 11v1.5" stroke="#333" stroke-width="0.8"/></svg>
<svg class="a" style="left:733px;top:66px;" width="16" height="17" viewBox="0 0 16 17"><path d="M2 15V7l3-5h6l1.5 3L15 8v7Z" fill="#a8c8f0" stroke="#303848" stroke-width="1.3"/><path d="M3 9l3-3M3 13l7-7M6 15l7-7M10 15l4-4" stroke="#e0ecfc" stroke-width="0.9"/></svg>
<svg class="a" style="left:755px;top:67px;" width="16" height="16" viewBox="0 0 16 16"><rect x="0.5" y="0.5" width="15" height="15" fill="#f0e8a0" opacity="0.7"/><circle cx="8" cy="8" r="6.3" fill="#2a7ad8" stroke="#555" stroke-width="0.8"/><path d="M4.5 6c1-1.5 2.5-2 4-1.5" stroke="#8cd0ff" stroke-width="1.5" fill="none"/><circle cx="9" cy="10" r="2" fill="#40a0f0"/></svg>
<svg class="a" style="left:775px;top:67px;" width="17" height="15" viewBox="0 0 17 15"><path d="M1 4.5L10 1.5L16 3.5L7 6.5Z" fill="#f2ea90" stroke="#8a8a50" stroke-width="0.8"/><path d="M1 4.5v2.5L7 9L16 6V3.5L7 6.5Z" fill="#e0d460" stroke="#8a8a50" stroke-width="0.8"/><path d="M1 7.5v2.5L7 12L16 9V6.5L7 9.5Z" fill="#e8dc70" stroke="#8a8a50" stroke-width="0.8"/><path d="M1 10.5v2.5L7 15L16 12V9.5L7 12.5Z" fill="#d8cc50" stroke="#8a8a50" stroke-width="0.8"/></svg>
<div class="a" style="left:436px;top:793px;width:491px;height:25px;background:#f0edeb;border-top:1px solid #a0a0a0"></div>
<div class="t" style="left:440px;top:801px;font-size:14px;color:#1e1e1e;">Identify element</div>
<div class="a" style="left:913px;top:796px;width:1px;height:21px;background:#a0a0a0"></div>
<svg class="a" style="left:432px;top:60px;" width="4" height="759" viewBox="0 0 4 759"><defs><pattern id="dp" width="2" height="2" patternUnits="userSpaceOnUse"><rect width="2" height="2" fill="#f0f0f0"/><rect width="1" height="1" fill="#707070"/><rect y="1" width="1" height="1" fill="#c4c4c4"/></pattern></defs><rect x="0" y="0" width="4" height="759" fill="url(#dp)"/></svg>
<div class="a" style="left:18px;top:63px;width:408px;height:490px;border:1px solid #8c8c8c;border-bottom:none;background:#f8f8f8"></div>
<div class="a" style="left:19px;top:64px;width:406px;height:25px;background:linear-gradient(#fcfcfc,#f4f4f4)"></div>
<div class="t" style="left:22px;top:69px;font-size:13.3px;color:#000;font-weight:bold;-webkit-text-stroke:0.25px #000">Objects</div>
<svg class="a" style="left:88px;top:69px;" width="16" height="16" viewBox="0 0 16 16"><path d="M1.5 8.5L8 2.5l6.5 6M3.5 7v7.5h9V7M10.5 3.5v-1.5h2v3.5" fill="none" stroke="#8e8e8e" stroke-width="1.4"/><rect x="5" y="9.5" width="2.5" height="5" fill="none" stroke="#8e8e8e" stroke-width="1.1"/><rect x="9" y="9.5" width="2.5" height="2.5" fill="#8e8e8e"/></svg>
<svg class="a" style="left:109px;top:70px;" width="15" height="14" viewBox="0 0 15 14"><path d="M2 7h11M2 7l4.5-4M2 7l4.5 4" fill="none" stroke="#b4b4b4" stroke-width="1.8"/></svg>
<div class="a" style="left:130px;top:69px;width:1px;height:16px;background:#c4c4c4;box-shadow:1px 0 0 #fff"></div>
<svg class="a" style="left:136px;top:71px;" width="13" height="12" viewBox="0 0 13 12"><path d="M0.5 1h12L8 6v5.5H5V6Z" fill="#7a7a7a"/><path d="M3 2.5h7" stroke="#bcbcbc" stroke-width="1"/></svg>
<div class="t" style="left:154px;top:70px;font-size:13.4px;color:#1e1e1e;">Types</div>
<svg class="a" style="left:197px;top:75px;" width="8" height="5" viewBox="0 0 8 5"><path d="M1 0.5h6L4 4Z" fill="#111"/></svg>
<div class="a" style="left:208px;top:69px;width:1px;height:16px;background:#c4c4c4;box-shadow:1px 0 0 #fff"></div>
<div class="a" style="left:211px;top:66px;width:24px;height:21px;border:1px solid #5aa8f4;background:linear-gradient(#fbfbfb,#f2f2f2)"></div>
<svg class="a" style="left:211px;top:66px;" width="24" height="21" viewBox="0 0 24 21"><path d="M11.5 5.5v10M6.5 10.5h10" stroke="#0f8f0f" stroke-width="3"/></svg>
<div class="a" style="left:234px;top:66px;width:24px;height:21px;border:1px solid #5aa8f4;background:linear-gradient(#fbfbfb,#f2f2f2)"></div>
<svg class="a" style="left:234px;top:66px;" width="24" height="21" viewBox="0 0 24 21"><path d="M6 10.5h11" stroke="#ee1010" stroke-width="3.2"/></svg>
<div class="a" style="left:257px;top:66px;width:24px;height:21px;border:1px solid #5aa8f4;background:linear-gradient(#fbfbfb,#f2f2f2)"></div>
<svg class="a" style="left:257px;top:66px;" width="24" height="21" viewBox="0 0 24 21"><path d="M11.6 5.6L17 14.4H6.2Z" fill="none" stroke="#10308f" stroke-width="2"/></svg>
<svg class="a" style="left:286px;top:72px;" width="12" height="10" viewBox="0 0 12 10"><path d="M2 2.5h8M2 7.5h8" stroke="#000" stroke-width="2.2"/></svg>
<div class="a" style="left:306px;top:69px;width:2px;height:16px;background:#c8c8c8;box-shadow:1px 0 0 #fff"></div>
<div class="a" style="left:309px;top:66px;width:24px;height:21px;border:1px solid #5aa8f4;background:linear-gradient(#fbfbfb,#f2f2f2)"></div>
<svg class="a" style="left:309px;top:66px;" width="24" height="21" viewBox="0 0 24 21"><path d="M5.5 11.5l3.6 4.3L17.2 6.2" fill="none" stroke="#17a017" stroke-width="2.3"/></svg>
<div class="a" style="left:332px;top:66px;width:24px;height:21px;border:1px solid #5aa8f4;background:linear-gradient(#fbfbfb,#f2f2f2)"></div>
<svg class="a" style="left:332px;top:66px;" width="24" height="21" viewBox="0 0 24 21"><path d="M6.5 6.5l9.5 9.5M16 6.5l-9.5 9.5" stroke="#cc1414" stroke-width="2"/></svg>
<div class="a" style="left:355px;top:66px;width:24px;height:21px;border:1px solid #5aa8f4;background:linear-gradient(#fbfbfb,#f2f2f2)"></div>
<svg class="a" style="left:355px;top:66px;" width="24" height="21" viewBox="0 0 24 21"><path d="M5.5 6.5l8 8M13.5 6.5l-8 8M9.5 5.5l8 8M17.5 5.5l-8 8" stroke="#cc1414" stroke-width="1.7"/></svg>
<div class="a" style="left:378px;top:66px;width:24px;height:21px;border:1px solid #5aa8f4;background:linear-gradient(#fbfbfb,#f2f2f2)"></div>
<svg class="a" style="left:378px;top:66px;" width="24" height="21" viewBox="0 0 24 21"><path d="M5.5 9l2.3 2.8L12.5 5" fill="none" stroke="#22aa22" stroke-width="1.6"/><path d="M11.5 11.5l5.5 5.5M17 11.5l-5.5 5.5" stroke="#dd2020" stroke-width="1.5"/></svg>
<div class="a" style="left:401px;top:66px;width:24px;height:21px;border:1px solid #5aa8f4;background:linear-gradient(#fbfbfb,#f2f2f2)"></div>
<svg class="a" style="left:401px;top:66px;" width="24" height="21" viewBox="0 0 24 21"><text x="11.5" y="17.5" text-anchor="middle" font-family="Liberation Sans" font-weight="bold" font-size="15.5" fill="#0000ee" stroke="#0000ee" stroke-width="0.7">?</text></svg>
<div class="a" style="left:19px;top:89px;width:407px;height:464px;background:#ababab;border:2px solid #262626;border-bottom:1px solid #262626"></div>
<div class="a" style="left:21px;top:91px;width:403px;height:21px;background:linear-gradient(#ffffff,#f6f6f6 60%,#eeeeee);border-bottom:1px solid #d8d8d8"></div>
<div class="a" style="left:43px;top:91px;width:1px;height:21px;background:#e2e2e2"></div>
<div class="a" style="left:155px;top:91px;width:1px;height:21px;background:#e2e2e2"></div>
<div class="a" style="left:329px;top:91px;width:1px;height:21px;background:#e2e2e2"></div>
<div class="a" style="left:377px;top:91px;width:1px;height:21px;background:#e2e2e2"></div>
<div class="a" style="left:22px;top:93px;width:21px;height:17px;border:1px solid #9a9a9a;background:linear-gradient(135deg,#dcdcdc,#f4f4f4 60%,#fcfcfc)"></div>
<svg class="a" style="left:22px;top:93px;" width="21" height="17" viewBox="0 0 21 17"><path d="M5.7 8.5l4.2 3.7L15.8 5.1" fill="none" stroke="#a0a0a0" stroke-width="2.2"/></svg>
<div class="t" style="left:51px;top:96px;font-size:12.5px;color:#1e1e1e;">Type</div>
<div class="t" style="left:163px;top:96px;font-size:12.5px;color:#1e1e1e;">Label</div>
<div class="t" style="left:337px;top:96px;font-size:12.5px;color:#1e1e1e;">Status</div>
<div class="t" style="left:384px;top:96px;font-size:12.5px;color:#1e1e1e;width:40px;overflow:hidden">Change</div>
<div class="a" style="left:21px;top:112px;width:403px;height:22px;background:#3399ff"></div>
<div class="a" style="left:21px;top:134px;width:403px;height:22px;background:#fff"></div>
<div class="a" style="left:43px;top:112px;width:1px;height:22px;background:#a0a0a0"></div>
<div class="a" style="left:155px;top:112px;width:1px;height:22px;background:#a0a0a0"></div>
<div class="a" style="left:329px;top:112px;width:1px;height:22px;background:#a0a0a0"></div>
<div class="a" style="left:377px;top:112px;width:1px;height:22px;background:#a0a0a0"></div>
<div class="a" style="left:21px;top:133px;width:403px;height:1px;background:#5aa0e6"></div>
<div class="a" style="left:43px;top:134px;width:1px;height:22px;background:#a0a0a0"></div>
<div class="a" style="left:155px;top:134px;width:1px;height:22px;background:#a0a0a0"></div>
<div class="a" style="left:329px;top:134px;width:1px;height:22px;background:#a0a0a0"></div>
<div class="a" style="left:377px;top:134px;width:1px;height:22px;background:#a0a0a0"></div>
<div class="a" style="left:21px;top:155px;width:403px;height:1px;background:#c8c8c8"></div>
<div class="a" style="left:26px;top:116px;width:14px;height:14px;border:1px solid #9a9a9a;background:linear-gradient(135deg,#dcdcdc,#f4f4f4 60%,#fcfcfc)"></div>
<div class="a" style="left:26px;top:138px;width:14px;height:14px;border:1px solid #9a9a9a;background:linear-gradient(135deg,#dcdcdc,#f4f4f4 60%,#fcfcfc)"></div>
<div class="t" style="left:47px;top:118px;font-size:12.1px;color:#fff;">Table Section</div>
<div class="t" style="left:159px;top:118px;font-size:11.8px;color:#fff;">610UB125</div>
<div class="t" style="left:333px;top:118px;font-size:12.1px;color:#fff;">Added</div>
<div class="t" style="left:381px;top:118px;font-size:12.1px;color:#fff;">Und...</div>
<div class="t" style="left:47px;top:140px;font-size:12.1px;color:#2a1a8a;">Curve Member</div>
<div class="t" style="left:159px;top:140px;font-size:11.8px;color:#2a1a8a;">610UB125(610UB125)(MATL 1)</div>
<div class="t" style="left:333px;top:140px;font-size:12.1px;color:#2a1a8a;">Modif...</div>
<div class="t" style="left:381px;top:140px;font-size:12.1px;color:#2a1a8a;">Und...</div>
<div class="a" style="left:18px;top:553px;width:408px;height:25px;background:linear-gradient(#fbfbfb,#f3f3f3);border-left:1px solid #a0a0a0;border-bottom:1px solid #d8d8d8"></div>
<div class="t" style="left:25px;top:558px;font-size:14px;color:#1e1e1e;">Select All</div>
<div class="t" style="left:94px;top:558px;font-size:14px;color:#1e1e1e;">Clear All</div>
<div class="a" style="left:155px;top:558px;width:1px;height:16px;background:#c8c8c8"></div>
<div class="t" style="left:164px;top:558px;font-size:14px;color:#1e1e1e;">Accept</div>
<div class="t" style="left:218px;top:558px;font-size:14px;color:#1e1e1e;">Reject</div>
<div class="t" style="left:268px;top:558px;font-size:14px;color:#1e1e1e;">Undecide</div>
<div class="a" style="left:335px;top:558px;width:1px;height:16px;background:#c8c8c8"></div>
<svg class="a" style="left:340px;top:558px;" width="16" height="16" viewBox="0 0 16 16"><path d="M5 1.2000000000000002L8.3 4.5L5 7.8L1.7000000000000002 4.5Z" fill="#fbfbfb" stroke="#b8d8b0" stroke-width="0.9"/><path d="M11 1.2000000000000002L14.3 4.5L11 7.8L7.7 4.5Z" fill="#fbfbfb" stroke="#b8d8b0" stroke-width="0.9"/><path d="M5 7.2L8.3 10.5L5 13.8L1.7000000000000002 10.5Z" fill="#f040c8" stroke="#f040c8" stroke-width="0.9"/><path d="M11 7.2L14.3 10.5L11 13.8L7.7 10.5Z" fill="#fbfbfb" stroke="#b8d8b0" stroke-width="0.9"/></svg>
<svg class="a" style="left:361px;top:559px;" width="18" height="15" viewBox="0 0 18 15"><rect x="1.5" y="1.5" width="15" height="11" fill="#fafafa" stroke="#8090a8" stroke-width="1"/><rect x="1.5" y="1.5" width="15" height="1.6" fill="#3050a0"/><path d="M9 4.5L12 7.5L9 10.5L6 7.5Z" fill="#60c040" stroke="#a0d090" stroke-width="0.7"/></svg>
<svg class="a" style="left:382px;top:558px;" width="16" height="16" viewBox="0 0 16 16"><path d="M5 1.2000000000000002L8.3 4.5L5 7.8L1.7000000000000002 4.5Z" fill="#fbfbfb" stroke="#c8c8c8" stroke-width="0.9"/><path d="M11 1.2000000000000002L14.3 4.5L11 7.8L7.7 4.5Z" fill="#fbfbfb" stroke="#c8c8c8" stroke-width="0.9"/><path d="M5 7.2L8.3 10.5L5 13.8L1.7000000000000002 10.5Z" fill="#70c840" stroke="#70c840" stroke-width="0.9"/><path d="M11 7.2L14.3 10.5L11 13.8L7.7 10.5Z" fill="#fbfbfb" stroke="#c8c8c8" stroke-width="0.9"/></svg>
<div class="a" style="left:404px;top:558px;width:1px;height:16px;background:#c8c8c8"></div>
<svg class="a" style="left:414px;top:566px;" width="11" height="12" viewBox="0 0 11 12"><defs><linearGradient id="og" x1="0" y1="0" x2="1" y2="1"><stop offset="0" stop-color="#f4f4f4"/><stop offset="1" stop-color="#a8a8a8"/></linearGradient></defs><rect x="0" y="0" width="11" height="12" rx="1.5" fill="url(#og)"/><path d="M3 4h5M3 6h5L5.5 9Z" stroke="#111" stroke-width="1" fill="#111"/></svg>
<div class="a" style="left:18px;top:587px;width:405px;height:192px;border:1px solid #8c8c8c;background:#f0f0f0"></div>
<div class="a" style="left:19px;top:588px;width:403px;height:22px;background:#f0f0f0;border-bottom:1px solid #8c8c8c"></div>
<div class="a" style="left:19px;top:610px;width:403px;height:168px;background:linear-gradient(#f4f4f4,#fafafa 20px,#fafafa)"></div>
<div class="a" style="left:18px;top:587px;width:73px;height:24px;border:1px solid #8c8c8c;border-bottom:none;background:linear-gradient(#fdfdfd,#f7f7f7)"></div>
<div class="t" style="left:27px;top:592px;font-size:12.5px;color:#1e1e1e;">Properties</div>
<div class="a" style="left:231px;top:613px;width:24px;height:21px;border:1px solid #5aa8f4;background:linear-gradient(#fbfbfb,#f2f2f2)"></div>
<svg class="a" style="left:231px;top:613px;" width="24" height="21" viewBox="0 0 24 21"><path d="M11.5 5.5v10M6.5 10.5h10" stroke="#0f8f0f" stroke-width="3"/></svg>
<div class="a" style="left:254px;top:613px;width:24px;height:21px;border:1px solid #5aa8f4;background:linear-gradient(#fbfbfb,#f2f2f2)"></div>
<svg class="a" style="left:254px;top:613px;" width="24" height="21" viewBox="0 0 24 21"><path d="M6 10.5h11" stroke="#ee1010" stroke-width="3.2"/></svg>
<div class="a" style="left:277px;top:613px;width:24px;height:21px;border:1px solid #5aa8f4;background:linear-gradient(#fbfbfb,#f2f2f2)"></div>
<svg class="a" style="left:277px;top:613px;" width="24" height="21" viewBox="0 0 24 21"><path d="M11.6 5.6L17 14.4H6.2Z" fill="none" stroke="#10308f" stroke-width="2"/></svg>
<svg class="a" style="left:305px;top:618px;" width="12" height="10" viewBox="0 0 12 10"><path d="M2 2.5h8M2 7.5h8" stroke="#000" stroke-width="2.2"/></svg>
<div class="a" style="left:326px;top:616px;width:1px;height:16px;background:#c8c8c8;box-shadow:1px 0 0 #fff"></div>
<div class="a" style="left:328px;top:613px;width:24px;height:21px;border:1px solid #5aa8f4;background:linear-gradient(#fbfbfb,#f2f2f2)"></div>
<svg class="a" style="left:328px;top:613px;" width="24" height="21" viewBox="0 0 24 21"><path d="M5.5 11.5l3.6 4.3L17.2 6.2" fill="none" stroke="#17a017" stroke-width="2.3"/></svg>
<div class="a" style="left:351px;top:613px;width:24px;height:21px;border:1px solid #5aa8f4;background:linear-gradient(#fbfbfb,#f2f2f2)"></div>
<svg class="a" style="left:351px;top:613px;" width="24" height="21" viewBox="0 0 24 21"><path d="M6.5 6.5l9.5 9.5M16 6.5l-9.5 9.5" stroke="#cc1414" stroke-width="2"/></svg>
<div class="a" style="left:374px;top:613px;width:24px;height:21px;border:1px solid #5aa8f4;background:linear-gradient(#fbfbfb,#f2f2f2)"></div>
<svg class="a" style="left:374px;top:613px;" width="24" height="21" viewBox="0 0 24 21"><path d="M5.5 6.5l8 8M13.5 6.5l-8 8M9.5 5.5l8 8M17.5 5.5l-8 8" stroke="#cc1414" stroke-width="1.7"/></svg>
<div class="a" style="left:397px;top:613px;width:24px;height:21px;border:1px solid #5aa8f4;background:linear-gradient(#fbfbfb,#f2f2f2)"></div>
<svg class="a" style="left:397px;top:613px;" width="24" height="21" viewBox="0 0 24 21"><text x="11.5" y="17.5" text-anchor="middle" font-family="Liberation Sans" font-weight="bold" font-size="15.5" fill="#0000ee" stroke="#0000ee" stroke-width="0.7">?</text></svg>
<div class="a" style="left:23px;top:636px;width:398px;height:115px;background:#ababab;border:2px solid #262626;border-bottom:1px solid #262626"></div>
<div class="a" style="left:25px;top:638px;width:394px;height:20px;background:linear-gradient(#ffffff,#f6f6f6 60%,#eeeeee)"></div>
<div class="a" style="left:46px;top:638px;width:1px;height:20px;background:#e2e2e2"></div>
<div class="a" style="left:122px;top:638px;width:1px;height:20px;background:#e2e2e2"></div>
<div class="a" style="left:268px;top:638px;width:1px;height:20px;background:#e2e2e2"></div>
<div class="a" style="left:350px;top:638px;width:1px;height:20px;background:#e2e2e2"></div>
<div class="a" style="left:385px;top:638px;width:1px;height:20px;background:#e2e2e2"></div>
<div class="a" style="left:26px;top:640px;width:21px;height:16px;border:1px solid #9a9a9a;background:linear-gradient(135deg,#dcdcdc,#f4f4f4 60%,#fcfcfc)"></div>
<svg class="a" style="left:26px;top:640px;" width="21" height="16" viewBox="0 0 21 16"><path d="M5.7 8.0l4.2 3.5L15.8 4.8" fill="none" stroke="#a0a0a0" stroke-width="2.2"/></svg>
<div class="t" style="left:54px;top:642px;font-size:12.5px;color:#1e1e1e;">Property</div>
<div class="t" style="left:129px;top:642px;font-size:12.5px;color:#1e1e1e;">New Value</div>
<div class="t" style="left:275px;top:642px;font-size:12.5px;color:#1e1e1e;">Old Value</div>
<div class="t" style="left:357px;top:642px;font-size:12.5px;color:#1e1e1e;">Statu</div>
<div class="t" style="left:392px;top:642px;font-size:12.5px;color:#1e1e1e;width:28px;overflow:hidden">Chan</div>
<div class="a" style="left:419px;top:638px;width:2px;height:20px;background:#f6f6f6"></div>
<div class="a" style="left:19px;top:751px;width:403px;height:27px;background:linear-gradient(#fbfbfb,#f3f3f3)"></div>
<div class="t" style="left:28px;top:757px;font-size:14px;color:#1e1e1e;">Select All</div>
<div class="t" style="left:98px;top:757px;font-size:14px;color:#1e1e1e;">Clear All</div>
<div class="a" style="left:159px;top:757px;width:1px;height:16px;background:#c8c8c8"></div>
<div class="t" style="left:167px;top:757px;font-size:14px;color:#1e1e1e;">Accept</div>
<div class="t" style="left:222px;top:757px;font-size:14px;color:#1e1e1e;">Reject</div>
<div class="t" style="left:271px;top:757px;font-size:14px;color:#1e1e1e;">Undecide</div>
<svg class="a" style="left:411px;top:765px;" width="11" height="12" viewBox="0 0 11 12"><rect x="0" y="0" width="11" height="12" rx="1.5" fill="url(#og)"/><path d="M3 4h5M3 6h5L5.5 9Z" stroke="#111" stroke-width="1" fill="#111"/></svg>
<div class="a" style="left:99px;top:788px;width:90px;height:24px;border:1px solid #707070;border-radius:3px;background:linear-gradient(#f2f2f2,#ebebeb 45%,#dddddd 50%,#cfcfcf);box-shadow:inset 0 0 0 1px #fcfcfc"></div>
<div class="t" style="left:99px;top:794px;font-size:13.2px;color:#1e1e1e;width:90px;text-align:center">Preview</div>
<div class="a" style="left:236px;top:788px;width:91px;height:24px;border:1px solid #707070;border-radius:3px;background:linear-gradient(#f2f2f2,#ebebeb 45%,#dddddd 50%,#cfcfcf);box-shadow:inset 0 0 0 1px #fcfcfc"></div>
<div class="t" style="left:236px;top:794px;font-size:13.2px;color:#1e1e1e;width:91px;text-align:center">Update</div>
<div class="a" style="left:334px;top:788px;width:91px;height:24px;border:1px solid #707070;border-radius:3px;background:linear-gradient(#f2f2f2,#ebebeb 45%,#dddddd 50%,#cfcfcf);box-shadow:inset 0 0 0 1px #fcfcfc"></div>
<div class="t" style="left:334px;top:794px;font-size:13.2px;color:#1e1e1e;width:91px;text-align:center">Cancel</div>
</body></html>
